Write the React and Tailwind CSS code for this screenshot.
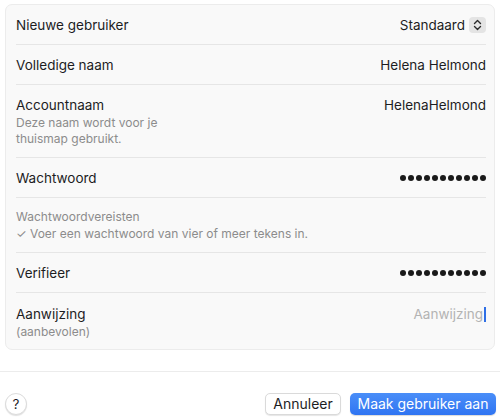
const Dots = () => (
    <div className="flex gap-[2px]">
        {Array.from({ length: 11 }).map((_, i) => (
            <span key={i} className="block h-[6px] w-[6px] rounded-full bg-[#1a1a1a]" />
        ))}
    </div>
)

const Stepper = () => (
    <span className="ml-[4px] flex h-[16px] w-[17px] items-center justify-center rounded-[4px] bg-[#e4e4e4]">
        <svg width="9" height="12" viewBox="0 0 9 12" fill="none" stroke="#2a2a2a" strokeWidth="1.4" strokeLinecap="round" strokeLinejoin="round">
            <path d="M1.5 4.5 L4.5 1.5 L7.5 4.5" />
            <path d="M1.5 7.5 L4.5 10.5 L7.5 7.5" />
        </svg>
    </span>
)

const Row = ({ children, className = '', last }) => (
    <div className={`flex justify-between ${last ? '' : 'border-b border-[#e6e6e6]'} ${className}`}>
        {children}
    </div>
)

export default function App() {
    return (
        <div className="flex h-[419px] w-[500px] flex-col bg-white text-[13.5px] leading-[16px] text-[#1d1d1f]" style={{ fontFamily: 'Inter, "Liberation Sans", sans-serif' }}>
            <div className="px-[5px] pt-[4px]">
                <div className="rounded-[7px] border border-[#ececec] bg-[#f9f9f9] pl-[10px] pr-[8px]">
                    <Row className="h-[40px] items-center">
                        <span>Nieuwe gebruiker</span>
                        <span className="flex items-center">
                            Standaard
                            <Stepper />
                        </span>
                    </Row>
                    <Row className="h-[40px] items-center">
                        <span>Volledige naam</span>
                        <span>Helena Helmond</span>
                    </Row>
                    <Row className="h-[73px] pt-[12px]">
                        <div>
                            <div>Accountnaam</div>
                            <div className="mt-[2px] text-[12px] text-[#8c8c8c]">
                                Deze naam wordt voor je
                                <br />
                                thuismap gebruikt.
                            </div>
                        </div>
                        <span>HelenaHelmond</span>
                    </Row>
                    <Row className="h-[40px] items-center">
                        <span>Wachtwoord</span>
                        <Dots />
                    </Row>
                    <Row className="h-[55px] pt-[11px]">
                        <div className="text-[12px] text-[#8c8c8c]">
                            <div>Wachtwoordvereisten</div>
                            <div className="mt-[1px]">✓ Voer een wachtwoord van vier of meer tekens in.</div>
                        </div>
                    </Row>
                    <Row className="h-[40px] items-center">
                        <span>Verifieer</span>
                        <Dots />
                    </Row>
                    <Row className="h-[56px] pt-[13px]" last>
                        <div>
                            <div>Aanwijzing</div>
                            <div className="mt-[2px] text-[12px] text-[#8c8c8c]">(aanbevolen)</div>
                        </div>
                        <span className="flex h-[16px] items-center text-[#b3b3b3]">
                            Aanwijzing
                            <span className="ml-[1px] block h-[15px] w-[2px] bg-[#2f6fe6]" />
                        </span>
                    </Row>
                </div>
            </div>
            <div className="mt-[21px] border-t border-[#ececec]" />
            <div className="flex items-center justify-between pl-[5px] pr-[4px] pt-[21px]">
                <button className="flex h-[22px] w-[22px] items-center justify-center rounded-full border border-[#dcdcdc] bg-white text-[13.5px] shadow-[0_1px_1px_rgba(0,0,0,0.12)]">
                    ?
                </button>
                <div className="flex gap-[9px]">
                    <button className="h-[22px] w-[76px] rounded-[5px] border border-[#dadada] bg-white text-[14px] shadow-[0_1px_1px_rgba(0,0,0,0.1)]">
                        Annuleer
                    </button>
                    <button className="h-[22px] w-[146px] rounded-[5px] bg-gradient-to-b from-[#4a8ef8] to-[#2f74f2] text-[14px] text-white shadow-[0_1px_1px_rgba(0,0,0,0.15)]">
                        Maak gebruiker aan
                    </button>
                </div>
            </div>
        </div>
    )
}
